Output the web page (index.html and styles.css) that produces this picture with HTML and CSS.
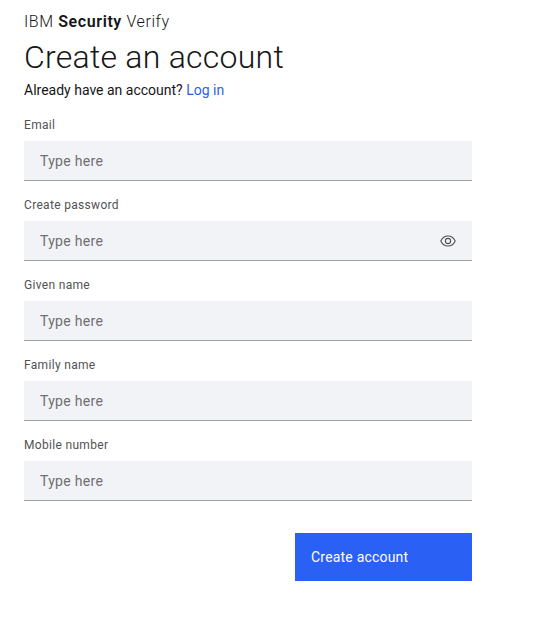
FILE: index.html
```html
<!DOCTYPE html>
<html lang="en">
    <head>
        <meta charset="UTF-8" />
        <title>Create an account</title>
        <link rel="stylesheet" href="styles.css">
    </head>
    <body>
        <div class="page">
            <div class="brand">IBM <b>Security</b> Verify</div>
            <h1>Create an account</h1>
            <p class="login">Already have an account? <a href="#">Log in</a></p>

            <form class="signup">
                <div class="field">
                    <label for="email">Email</label>
                    <div class="input-wrap"><input type="text" id="email" placeholder="Type here" /></div>
                </div>
                <div class="field">
                    <label for="password">Create password</label>
                    <div class="input-wrap">
                        <input type="text" id="password" placeholder="Type here" />
                        <svg class="eye" width="16" height="16" viewBox="0 0 16 16" fill="none" stroke="#525252" stroke-width="1.1">
                            <path d="M0.8 8C2.2 4.9 4.9 3 8 3s5.8 1.9 7.2 5c-1.4 3.1-4.1 5-7.2 5S2.2 11.1 0.8 8z" />
                            <circle cx="8" cy="8" r="2.6" />
                        </svg>
                    </div>
                </div>
                <div class="field">
                    <label for="given">Given name</label>
                    <div class="input-wrap"><input type="text" id="given" placeholder="Type here" /></div>
                </div>
                <div class="field">
                    <label for="family">Family name</label>
                    <div class="input-wrap"><input type="text" id="family" placeholder="Type here" /></div>
                </div>
                <div class="field">
                    <label for="mobile">Mobile number</label>
                    <div class="input-wrap"><input type="text" id="mobile" placeholder="Type here" /></div>
                </div>
                <div class="actions">
                    <button type="button">Create account</button>
                </div>
            </form>
        </div>
    </body>
</html>
```

FILE: styles.css
```css
body {
    margin: 0;
    font-family: Roboto, "Noto Sans", sans-serif;
    color: #161616;
    background-color: #fff;
}

.page {
    width: 448px;
    padding: 11px 0 0 24px;
}

/* header */
.brand {
    font-size: 16px;
    line-height: 22px;
    font-weight: 300;
    letter-spacing: 0.6px;
}

.brand b {
    font-weight: 600;
}

h1 {
    margin: 2px 0 0;
    font-size: 32px;
    line-height: 44px;
    font-weight: 300;
    letter-spacing: 0.25px;
}

.login {
    margin: 1px 0 0;
    font-size: 14px;
    line-height: 20px;
}

.login a {
    color: #2f5fe8;
    text-decoration: none;
}

/* form */
.signup {
    margin-top: 17px;
}

.field {
    margin-bottom: 16px;
}

.field label {
    display: block;
    height: 24px;
    font-size: 12px;
    line-height: 16px;
    letter-spacing: 0.32px;
    color: #525252;
}

.input-wrap {
    position: relative;
}

.input-wrap input {
    display: block;
    box-sizing: border-box;
    width: 100%;
    height: 40px;
    padding: 0 16px;
    border: none;
    border-bottom: 1px solid #a0a0a0;
    border-radius: 0;
    background-color: #f2f3f7;
    font-family: inherit;
    font-size: 14px;
    letter-spacing: 0.3px;
}

.input-wrap input::placeholder {
    color: #6f6f6f;
    opacity: 1;
}

.eye {
    position: absolute;
    top: 12px;
    right: 16px;
}

.actions {
    display: flex;
    justify-content: flex-end;
    margin-top: 32px;
}

.actions button {
    width: 177px;
    height: 48px;
    padding: 0 16px;
    border: none;
    background-color: #2b60f5;
    color: #fff;
    font-family: inherit;
    font-size: 14px;
    letter-spacing: 0.2px;
    text-align: left;
    cursor: pointer;
}
```
